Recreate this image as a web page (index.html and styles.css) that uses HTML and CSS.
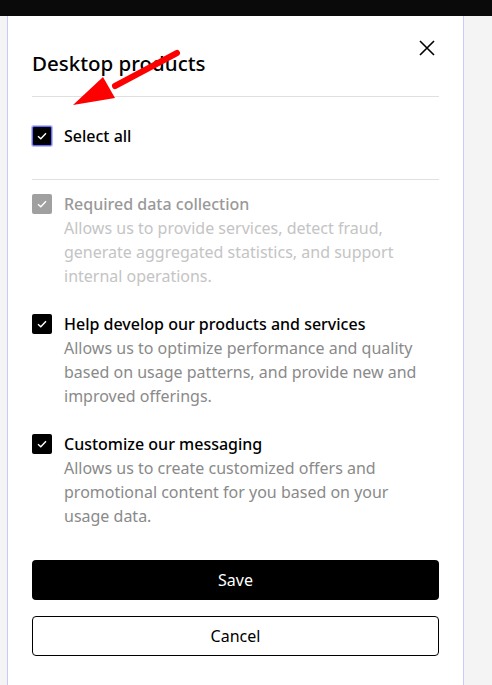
FILE: index.html
```html
<!DOCTYPE html>
<html lang="en">
<head>
<meta charset="utf-8">
<title>Desktop products</title>
<link rel="stylesheet" href="styles.css">
</head>
<body>
<div class="topbar"></div>
<div class="panel">
  <div class="header">
    <h1 class="title">Desktop products</h1>
    <button class="close" aria-label="Close">
      <svg width="16" height="16" viewBox="0 0 16 16"><path d="M1 1L15 15M15 1L1 15" stroke="#000" stroke-width="1.6" fill="none"/></svg>
    </button>
  </div>
  <div class="select-all">
    <span class="box focus"><svg width="10" height="8" viewBox="0 0 10 8"><path d="M1 4.2L3.8 6.8L9 1.2" stroke="#fff" stroke-width="1.4" fill="none"/></svg></span>
    <span class="sa-label">Select all</span>
  </div>
  <div class="options">
    <div class="option disabled">
      <span class="box grey"><svg width="10" height="8" viewBox="0 0 10 8"><path d="M1 4.2L3.8 6.8L9 1.2" stroke="#fff" stroke-width="1.4" fill="none"/></svg></span>
      <div class="text">
        <div class="label">Required data collection</div>
        <div class="desc">Allows us to provide services, detect fraud, generate aggregated statistics, and support internal operations.</div>
      </div>
    </div>
    <div class="option">
      <span class="box"><svg width="10" height="8" viewBox="0 0 10 8"><path d="M1 4.2L3.8 6.8L9 1.2" stroke="#fff" stroke-width="1.4" fill="none"/></svg></span>
      <div class="text">
        <div class="label">Help develop our products and services</div>
        <div class="desc">Allows us to optimize performance and quality based on usage patterns, and provide new and improved offerings.</div>
      </div>
    </div>
    <div class="option">
      <span class="box"><svg width="10" height="8" viewBox="0 0 10 8"><path d="M1 4.2L3.8 6.8L9 1.2" stroke="#fff" stroke-width="1.4" fill="none"/></svg></span>
      <div class="text">
        <div class="label">Customize our messaging</div>
        <div class="desc">Allows us to create customized offers and promotional content for you based on your usage data.</div>
      </div>
    </div>
  </div>
  <div class="actions">
    <button class="btn primary">Save</button>
    <button class="btn secondary">Cancel</button>
  </div>
  <svg class="arrow" width="130" height="75" viewBox="0 0 130 75">
    <path d="M117 13L55 46" stroke="#ff0000" stroke-width="6" stroke-linecap="round" fill="none"/>
    <path d="M13 65L43 37L55 58Z" fill="#ff0000"/>
  </svg>
</div>
</body>
</html>
```
FILE: styles.css
```css
html, body {
  margin: 0;
  padding: 0;
}
body {
  background: #f4f4f4;
  font-family: "Noto Sans", "DejaVu Sans", sans-serif;
  color: #000;
  height: 685px;
  overflow: hidden;
}
.topbar {
  height: 16px;
  background: #0a0a0a;
}
.panel {
  position: relative;
  margin-left: 7px;
  width: 457px;
  height: 669px;
  background: #fff;
  border-left: 1px solid #c9c9fb;
  border-right: 1px solid #c9c9fb;
  padding: 0 24px;
  box-sizing: border-box;
}
.header {
  display: flex;
  justify-content: space-between;
  align-items: flex-start;
  height: 80px;
  border-bottom: 1px solid #e0e0e0;
}
.title {
  margin: 35px 0 0;
  font-size: 20.5px;
  font-weight: 500;
  line-height: 24px;
}
.close {
  margin: 24px 4px 0 0;
  padding: 0;
  border: 0;
  background: none;
  width: 16px;
  height: 16px;
  display: flex;
}
.select-all {
  display: flex;
  align-items: center;
  gap: 12px;
  padding: 27px 0 31px;
  border-bottom: 1px solid #e0e0e0;
}
.sa-label {
  font-size: 16px;
  font-weight: 500;
  line-height: 24px;
}
.box {
  flex: none;
  width: 20px;
  height: 20px;
  border-radius: 2px;
  background: #000;
  display: flex;
  align-items: center;
  justify-content: center;
  box-sizing: border-box;
}
.box.focus {
  border: 1px solid #6b6bff;
  box-shadow: 0 0 0 1px #bdbdfa;
}
.box.grey {
  background: #a0a0a0;
}
.options {
  display: flex;
  flex-direction: column;
  gap: 24px;
  padding-top: 12px;
}
.option {
  display: flex;
  gap: 12px;
  align-items: flex-start;
}
.option .box {
  margin-top: 2px;
}
.text {
  flex: 1;
}
.label {
  font-size: 16px;
  font-weight: 500;
  line-height: 24px;
  color: #000;
}
.desc {
  font-size: 16px;
  line-height: 24px;
  color: #8a8a8a;
  padding-right: 20px;
}
.disabled .label {
  color: #999;
}
.disabled .desc {
  color: #c4c4c4;
}
.actions {
  display: flex;
  flex-direction: column;
  gap: 16px;
  margin-top: 32px;
}
.btn {
  height: 40px;
  border-radius: 4px;
  font-family: inherit;
  font-size: 16px;
  width: 100%;
  cursor: pointer;
}
.primary {
  background: #000;
  color: #fff;
  border: 0;
}
.secondary {
  background: #fff;
  color: #000;
  border: 1px solid #000;
}
.arrow {
  position: absolute;
  left: 52px;
  top: 24px;
}
```
